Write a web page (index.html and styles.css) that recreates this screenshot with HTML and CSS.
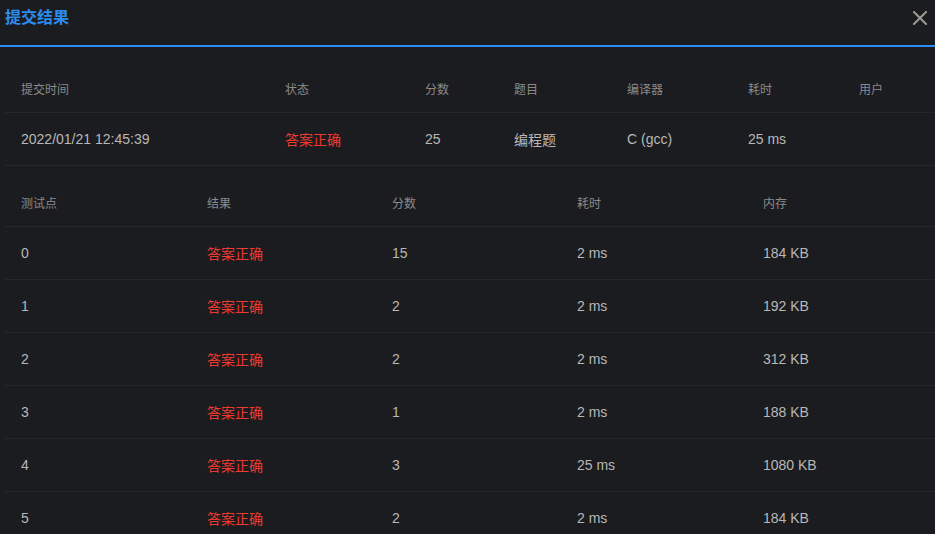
FILE: index.html
```html
<!DOCTYPE html>
<html lang="zh-CN">
<head>
<meta charset="utf-8">
<title>提交结果</title>
<link rel="stylesheet" href="styles.css">
</head>
<body>
<div class="dialog">
  <div class="dialog-header">
    <div class="dialog-title">提交结果</div>
    <svg class="close" width="14" height="14" viewBox="0 0 14 14">
      <path d="M1 1L13 13M13 1L1 13" stroke="#9d9a94" stroke-width="2" fill="none" stroke-linecap="square"/>
    </svg>
  </div>
  <div class="content">
    <div class="table summary">
      <div class="row head">
        <div class="cell">提交时间</div>
        <div class="cell">状态</div>
        <div class="cell">分数</div>
        <div class="cell">题目</div>
        <div class="cell">编译器</div>
        <div class="cell">耗时</div>
        <div class="cell">用户</div>
      </div>
      <div class="row">
        <div class="cell">2022/01/21 12:45:39</div>
        <div class="cell ok">答案正确</div>
        <div class="cell">25</div>
        <div class="cell">编程题</div>
        <div class="cell">C (gcc)</div>
        <div class="cell">25 ms</div>
        <div class="cell"></div>
      </div>
    </div>
    <div class="table cases">
      <div class="row head">
        <div class="cell">测试点</div>
        <div class="cell">结果</div>
        <div class="cell">分数</div>
        <div class="cell">耗时</div>
        <div class="cell">内存</div>
      </div>
      <div class="row">
        <div class="cell">0</div><div class="cell ok">答案正确</div><div class="cell">15</div><div class="cell">2 ms</div><div class="cell">184 KB</div>
      </div>
      <div class="row">
        <div class="cell">1</div><div class="cell ok">答案正确</div><div class="cell">2</div><div class="cell">2 ms</div><div class="cell">192 KB</div>
      </div>
      <div class="row">
        <div class="cell">2</div><div class="cell ok">答案正确</div><div class="cell">2</div><div class="cell">2 ms</div><div class="cell">312 KB</div>
      </div>
      <div class="row">
        <div class="cell">3</div><div class="cell ok">答案正确</div><div class="cell">1</div><div class="cell">2 ms</div><div class="cell">188 KB</div>
      </div>
      <div class="row">
        <div class="cell">4</div><div class="cell ok">答案正确</div><div class="cell">3</div><div class="cell">25 ms</div><div class="cell">1080 KB</div>
      </div>
      <div class="row">
        <div class="cell">5</div><div class="cell ok">答案正确</div><div class="cell">2</div><div class="cell">2 ms</div><div class="cell">184 KB</div>
      </div>
    </div>
  </div>
</div>
</body>
</html>
```
FILE: styles.css
```css
html, body {
  margin: 0;
  padding: 0;
  background: #1b1c1f;
  overflow: hidden;
}
body {
  font-family: "Liberation Sans", "Noto Sans CJK SC", sans-serif;
  color: #b8b8b8;
}
.dialog {
  width: 935px;
}
.dialog-header {
  height: 47px;
  box-sizing: border-box;
  border-bottom: 2px solid #2d8cf0;
  display: flex;
  justify-content: space-between;
  align-items: flex-start;
  padding: 0 8px 0 5px;
}
.dialog-title {
  margin-top: 8px;
  font-size: 16px;
  line-height: 20px;
  font-weight: bold;
  color: #2d8cf0;
}
.close {
  margin-top: 11px;
  display: block;
}
.content {
  padding: 18px 0 0 5px;
}
.table {
  width: 930px;
}
.cases {
  margin-top: 13px;
}
.row {
  display: grid;
  height: 52px;
  border-bottom: 1px solid #26272b;
  align-items: center;
  font-size: 14px;
}
.summary .row {
  grid-template-columns: 264px 140px 89px 113px 121px 111px 92px;
}
.cases .row {
  grid-template-columns: 186px 185px 185px 186px 188px;
}
.row.head {
  height: 47px;
  font-size: 12px;
  color: #8b8b8b;
}
.cell {
  padding-left: 16px;
  white-space: nowrap;
}
.ok {
  color: #ee3a31;
}
```
